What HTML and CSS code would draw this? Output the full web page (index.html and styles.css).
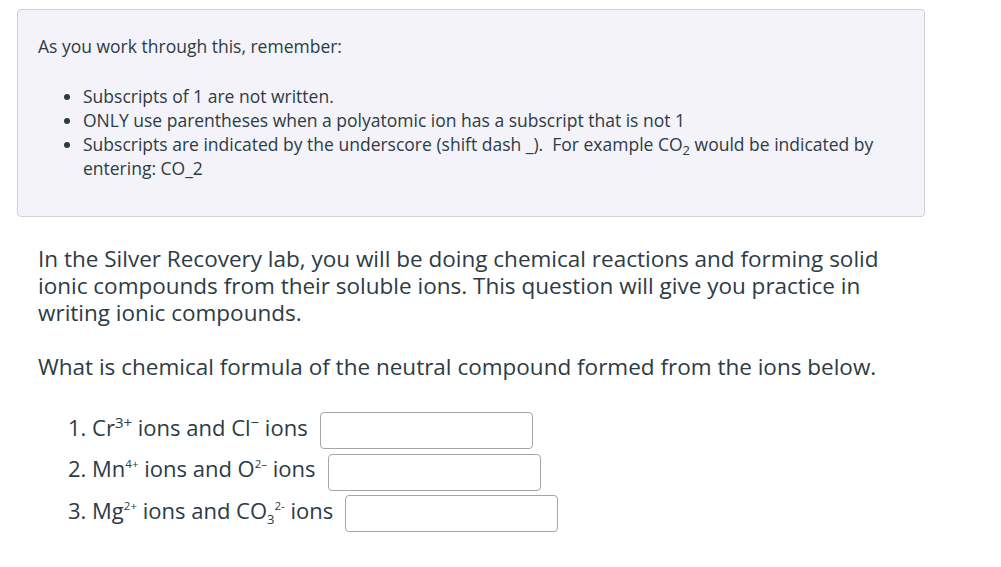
FILE: index.html
```html
<!DOCTYPE html>
<html lang="en">
<head>
<meta charset="utf-8">
<title>Ionic compounds</title>
<link rel="stylesheet" href="styles.css">
</head>
<body>
<div class="page">
  <div class="callout">
    <p class="callout-title">As you work through this, remember:</p>
    <ul class="rules">
      <li>Subscripts of 1 are not written.</li>
      <li>ONLY use parentheses when a polyatomic ion has a subscript that is not 1</li>
      <li>Subscripts are indicated by the underscore (shift dash _).&nbsp; For example CO<sub class="sub">2</sub> would be indicated by entering: CO_2</li>
    </ul>
  </div>
  <div class="question">
    <p class="lead">In the Silver Recovery lab, you will be doing chemical reactions and forming solid ionic compounds from their soluble ions. This question will give you practice in writing ionic compounds.</p>
    <p class="lead ask">What is chemical formula of the neutral compound formed from the ions below.</p>
    <div class="items">
      <div class="item"><span class="label">1. Cr<sup class="big">3+</sup> ions and Cl<sup class="big">−</sup> ions</span><input class="answer" type="text"></div>
      <div class="item"><span class="label">2. Mn<sup class="sm">4+</sup> ions and O<sup class="sm">2–</sup> ions</span><input class="answer" type="text"></div>
      <div class="item"><span class="label">3. Mg<sup class="sm">2+</sup> ions and CO<sub class="sm3">3</sub><sup class="sm2">2-</sup> ions</span><input class="answer" type="text"></div>
    </div>
  </div>
</div>
</body>
</html>
```

FILE: styles.css
```css
html, body {
  margin: 0;
  padding: 0;
  background: #ffffff;
}
body {
  font-family: "Open Sans", "DejaVu Sans", sans-serif;
  color: #2d3b45;
}
.page {
  padding: 9px 0 0 17px;
}
.callout {
  box-sizing: border-box;
  width: 908px;
  background: #f3f3f9;
  border: 1px solid #cfd2d6;
  border-radius: 4px;
  padding: 24px 20px 36px 20px;
  font-size: 17.5px;
  line-height: 24px;
}
.callout-title {
  margin: 0;
}
.rules {
  margin: 26px 0 0 0;
  padding-left: 45px;
}
.sub {
  font-size: 13px;
  line-height: 0;
  vertical-align: -4px;
}
.question {
  padding-left: 21px;
  padding-top: 28px;
}
.lead {
  margin: 0;
  font-size: 22.5px;
  line-height: 27px;
  max-width: 860px;
}
.ask {
  margin-top: 27px;
}
.items {
  margin-top: 32px;
  padding-left: 30px;
  display: flex;
  flex-direction: column;
  gap: 4.5px;
}
.item {
  display: flex;
  align-items: center;
  gap: 12px;
  font-size: 22px;
  line-height: 28px;
}
.label {
  white-space: nowrap;
  position: relative;
  top: -4px;
}
.big {
  font-size: 15px;
  line-height: 0;
  vertical-align: 8px;
}
.sm {
  font-size: 11.5px;
  line-height: 0;
  vertical-align: 9px;
}
.sm3 {
  font-size: 13px;
  line-height: 0;
  vertical-align: -5px;
}
.sm2 {
  font-size: 11.5px;
  line-height: 0;
  vertical-align: 9px;
}
.answer {
  box-sizing: border-box;
  width: 213px;
  height: 37px;
  margin: 0;
  border: 1px solid #a5a5a5;
  border-radius: 4px;
  background: #ffffff;
  font-family: inherit;
  font-size: 16px;
}
```
